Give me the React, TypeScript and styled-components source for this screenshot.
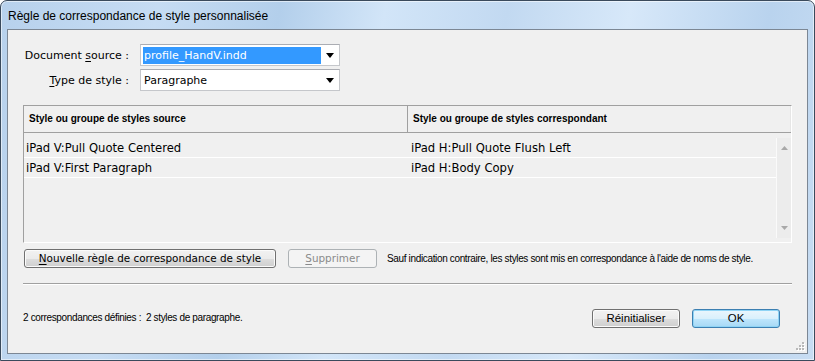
import React from "react";
import styled, { createGlobalStyle, css } from "styled-components";

const Global = createGlobalStyle`
  html, body { margin: 0; padding: 0; overflow: hidden; background: #ffffff; }
  * { box-sizing: border-box; }
`;

const Window = styled.div`
  width: 815px;
  height: 361px;
  border: 1px solid #3a4a5c;
  border-radius: 7px 7px 0 0;
  box-shadow: inset 0 0 0 1px rgba(255, 255, 255, 0.55);
  background: linear-gradient(
    100deg,
    #b7d1ec 0%,
    #c6dcf3 18%,
    #b3cfeb 32%,
    #d2e5f8 44%,
    #c2d9f1 58%,
    #d7e8f9 72%,
    #b9d3ee 88%,
    #c8ddf3 100%
  );
  display: flex;
  flex-direction: column;
  padding: 0 6px 6px 6px;
`;

const TitleBar = styled.div`
  height: 28px;
  display: flex;
  align-items: center;
  padding-left: 1px;
  padding-top: 1px;
  font-family: "Liberation Sans", Arial, sans-serif;
  font-size: 12px;
  color: #000;
`;

const Panel = styled.div`
  position: relative;
  flex: 1;
  border: 1px solid #7c8794;
  background: #f0f0f0;
  padding: 14px 15px 0 15px;
  display: flex;
  flex-direction: column;
`;

const FormGrid = styled.div`
  display: grid;
  grid-template-columns: 106px 200px;
  column-gap: 10px;
  row-gap: 3px;
  align-items: center;
  margin-left: 1px;
`;

const Label = styled.label`
  font-family: "DejaVu Sans", Tahoma, sans-serif;
  font-size: 11px;
  color: #000;
  white-space: nowrap;
  justify-self: end;
  margin-right: 1px;
`;

const Combo = styled.div`
  height: 22px;
  background: #fff;
  border: 1px solid #c5c7cb;
  border-top-color: #abadb3;
  display: flex;
  align-items: center;
  padding: 2px 0 2px 2px;
`;

const ComboText = styled.div<{ $selected?: boolean }>`
  width: 178px;
  height: 17px;
  line-height: 17px;
  padding-left: 1px;
  font-family: "DejaVu Sans", Tahoma, sans-serif;
  font-size: 11px;
  white-space: nowrap;
  color: ${(p) => (p.$selected ? "#fff" : "#000")};
  background: ${(p) => (p.$selected ? "#3399ff" : "transparent")};
`;

const ComboArrow = styled.svg`
  margin-left: auto;
  margin-right: 5px;
  margin-top: 1px;
`;

const Table = styled.div`
  margin-top: 14px;
  height: 138px;
  border-top: 1px solid #a0a0a0;
  border-left: 1px solid #a0a0a0;
  border-bottom: 1px solid #ffffff;
  border-right: 1px solid #ffffff;
  display: flex;
  flex-direction: column;
`;

const HeaderRow = styled.div`
  display: grid;
  grid-template-columns: 383px 1fr;
  height: 27px;
  border-bottom: 1px solid #a0a0a0;
`;

const HeaderCell = styled.div<{ $divider?: boolean }>`
  display: flex;
  align-items: center;
  padding-left: 5px;
  padding-bottom: 1px;
  font-family: "Liberation Sans", Arial, sans-serif;
  font-weight: bold;
  font-size: 10px;
  color: #000;
  ${(p) =>
    p.$divider &&
    css`
      border-left: 1px solid #a0a0a0;
      border-right: 1px solid #e6e6e6;
    `}
`;

const Body = styled.div`
  flex: 1;
  display: grid;
  grid-template-columns: 1fr 15px;
  padding-top: 5px;
`;

const List = styled.div`
  display: flex;
  flex-direction: column;
`;

const Row = styled.div`
  display: grid;
  grid-template-columns: 383px 1fr;
  height: 20px;
  border-bottom: 1px solid #ffffff;
  align-items: center;
`;

const Cell = styled.div<{ $second?: boolean }>`
  padding-left: ${(p) => (p.$second ? "4px" : "2px")};
  font-family: "DejaVu Sans", Tahoma, sans-serif;
  font-size: 11.6px;
  color: #000;
  white-space: nowrap;
`;

const Scrollbar = styled.div`
  height: 100px;
  background: #ececec;
  border-left: 1px solid #fafafa;
  display: flex;
  flex-direction: column;
  justify-content: space-between;
  align-items: center;
  padding: 8px 0 8px 0;
`;

const ButtonRow = styled.div`
  margin-top: 6px;
  margin-left: 1px;
  display: flex;
  align-items: center;
`;

const Button = styled.button<{ $width: number; $segoe?: boolean; $disabled?: boolean; $default?: boolean }>`
  width: ${(p) => p.$width}px;
  height: 19px;
  padding: 0;
  margin: 0;
  border: 1px solid #707070;
  border-radius: 3px;
  background: linear-gradient(#f2f2f2 0%, #ebebeb 50%, #dddddd 51%, #cfcfcf 100%);
  box-shadow: inset 0 0 0 1px #fbfbfb;
  color: #000;
  font-family: ${(p) =>
    p.$segoe ? `"Liberation Sans", Arial, sans-serif` : `"DejaVu Sans", Tahoma, sans-serif`};
  font-size: ${(p) => (p.$segoe ? "11.4px" : "10.4px")};
  line-height: 17px;
  text-align: center;
  ${(p) =>
    p.$disabled &&
    css`
      border-color: #adb2b5;
      background: #f4f4f4;
      box-shadow: none;
      color: #8a8a8a;
    `}
  ${(p) =>
    p.$default &&
    css`
      border-color: #3c7fb1;
      background: linear-gradient(#eaf6fd 0%, #d9f0fc 50%, #bee6fd 51%, #a7d9f5 100%);
      box-shadow: inset 0 0 0 1px #8fd4f5;
    `}
`;

const Info = styled.span`
  margin-left: 10px;
  font-family: "Liberation Sans", Arial, sans-serif;
  font-size: 10px;
  letter-spacing: -0.35px;
  color: #000;
  white-space: nowrap;
`;

const Separator = styled.div`
  margin-top: 15px;
  height: 1px;
  background: #a0a0a0;
  box-shadow: 0 1px 0 #ffffff;
`;

const Footer = styled.div`
  margin-top: 25px;
  display: flex;
  align-items: center;
`;

const Summary = styled.span`
  font-family: "Liberation Sans", Arial, sans-serif;
  font-size: 10px;
  letter-spacing: -0.35px;
  color: #000;
  white-space: pre;
  margin-top: -3px;
`;

const FooterButtons = styled.div`
  margin-left: auto;
  margin-right: 12px;
  display: flex;
  gap: 12px;
`;

const Grip = styled.svg`
  position: absolute;
  right: 2px;
  bottom: 2px;
`;

const Acc = styled.span`
  text-decoration: underline;
  text-underline-offset: 2px;
`;

const rows = [
  ["iPad V:Pull Quote Centered", "iPad H:Pull Quote Flush Left"],
  ["iPad V:First Paragraph", "iPad H:Body Copy"],
];

const DownArrow = () => (
  <ComboArrow width="8" height="5" viewBox="0 0 8 5">
    <polygon points="0,0 8,0 4,5" fill="#000" />
  </ComboArrow>
);

export default function App() {
  return (
    <>
      <Global />
      <Window>
        <TitleBar>Règle de correspondance de style personnalisée</TitleBar>
        <Panel>
          <FormGrid>
            <Label>
              Document <Acc>s</Acc>ource :
            </Label>
            <Combo>
              <ComboText $selected>profile_HandV.indd</ComboText>
              <DownArrow />
            </Combo>
            <Label>
              <Acc>T</Acc>ype de style :
            </Label>
            <Combo>
              <ComboText>Paragraphe</ComboText>
              <DownArrow />
            </Combo>
          </FormGrid>

          <Table>
            <HeaderRow>
              <HeaderCell>Style ou groupe de styles source</HeaderCell>
              <HeaderCell $divider>Style ou groupe de styles correspondant</HeaderCell>
            </HeaderRow>
            <Body>
              <List>
                {rows.map(([a, b]) => (
                  <Row key={a}>
                    <Cell>{a}</Cell>
                    <Cell $second>{b}</Cell>
                  </Row>
                ))}
              </List>
              <Scrollbar>
                <svg width="7" height="4" viewBox="0 0 7 4">
                  <polygon points="0,4 7,4 3.5,0" fill="#a8a8a8" />
                </svg>
                <svg width="7" height="4" viewBox="0 0 7 4">
                  <polygon points="0,0 7,0 3.5,4" fill="#a8a8a8" />
                </svg>
              </Scrollbar>
            </Body>
          </Table>

          <ButtonRow>
            <Button $width={252}>
              <Acc>N</Acc>ouvelle règle de correspondance de style
            </Button>
            <Button $width={89} $disabled style={{ marginLeft: 12 }}>
              <Acc>S</Acc>upprimer
            </Button>
            <Info>
              Sauf indication contraire, les styles sont mis en correspondance à l'aide de noms de style.
            </Info>
          </ButtonRow>

          <Separator />

          <Footer>
            <Summary>2 correspondances définies :  2 styles de paragraphe.</Summary>
            <FooterButtons>
              <Button $width={88} $segoe>
                Réinitialiser
              </Button>
              <Button $width={88} $segoe $default>
                OK
              </Button>
            </FooterButtons>
          </Footer>

          <Grip width="10" height="10" viewBox="0 0 10 10">
            {[
              [7, 1],
              [4, 4],
              [7, 4],
              [1, 7],
              [4, 7],
              [7, 7],
            ].map(([x, y]) => (
              <g key={`${x}-${y}`}>
                <rect x={x + 1} y={y + 1} width="2" height="2" fill="#ffffff" />
                <rect x={x} y={y} width="2" height="2" fill="#b8b8b8" />
              </g>
            ))}
          </Grip>
        </Panel>
      </Window>
    </>
  );
}
